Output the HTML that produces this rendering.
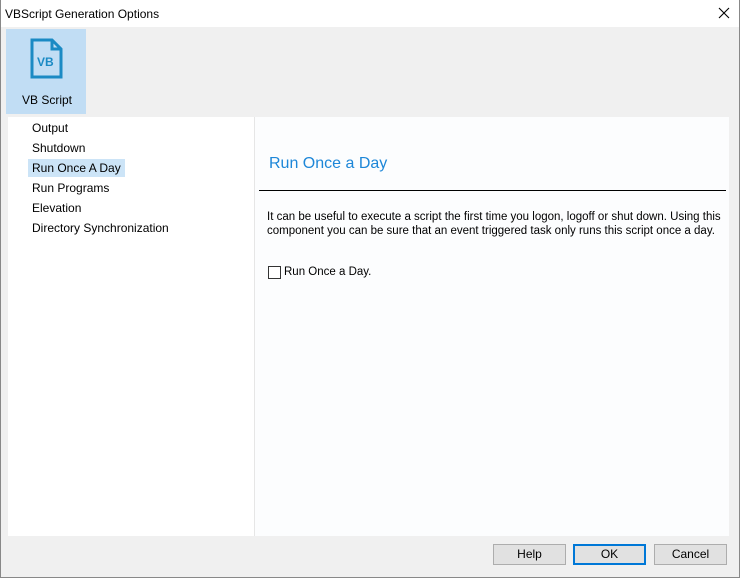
<!DOCTYPE html>
<html><head><meta charset="utf-8"><style>
*{margin:0;padding:0;box-sizing:border-box}
body{width:740px;height:578px;background:#fff;font-family:"Liberation Sans",sans-serif;font-size:12px;color:#000;position:relative;overflow:hidden}
.win{position:absolute;left:0;top:0;width:740px;height:578px;border:1px solid #888;border-top:none;background:#f0f0f0}
.title{position:absolute;left:0;top:0;width:738px;height:27px;background:#fff;font-size:12px}
.title span{position:absolute;left:4px;top:7px}
.x{position:absolute;left:716px;top:6px}
.tile{position:absolute;left:5px;top:29px;width:80px;height:85px;background:#c1ddf4}
.tile span{position:absolute;left:16px;top:64px}
.left{position:absolute;left:7px;top:117px;width:246px;height:419px;background:#fff}
.item{position:absolute;left:24px;height:18px;line-height:18px}
.sel{background:#cce4f7;padding:0 4px;left:20px}
.right{position:absolute;left:253px;top:117px;width:475px;height:419px;background:#fcfdfe;border-left:1px solid #e6e6e6}
h1{position:absolute;left:14px;top:38px;font-weight:normal;font-size:16px;color:#1e87d8}
.hr{position:absolute;left:4px;top:73px;width:467px;height:1px;background:#000}
.p{position:absolute;left:12px;top:93px;line-height:14px;font-size:11.5px}
.cb{position:absolute;left:13px;top:149px;width:13px;height:13px;border:1px solid #333;background:#fff}
.cbl{position:absolute;left:29px;top:149px;font-size:11.5px}
.btn{position:absolute;top:544px;width:73px;height:21px;background:#e1e1e1;border:1px solid #adadad;text-align:center;line-height:19px}
</style></head><body>
<div class="win">
<div class="title"><span>VBScript Generation Options</span>
<svg class="x" width="14" height="14" viewBox="0 0 14 14"><path d="M2 2L12 12M12 2L2 12" stroke="#000" stroke-width="1.1"/></svg></div>
<div class="tile">
<svg style="position:absolute;left:24px;top:9px" width="34" height="42" viewBox="0 0 34 42"><path d="M2 2H22L31 11V39H2Z M22 2V11H31" fill="none" stroke="#1b8ac4" stroke-width="3"/><text x="7" y="28" font-family="Liberation Sans" font-weight="bold" font-size="12" fill="#1b8ac4">VB</text></svg>
<span>VB Script</span></div>
<div class="left">
<div class="item" style="top:2px">Output</div>
<div class="item" style="top:22px">Shutdown</div>
<div class="item sel" style="top:42px">Run Once A Day</div>
<div class="item" style="top:62px">Run Programs</div>
<div class="item" style="top:82px">Elevation</div>
<div class="item" style="top:102px">Directory Synchronization</div>
</div>
<div class="right">
<h1>Run Once a Day</h1>
<div class="hr"></div>
<div class="p">It can be useful to execute a script the first time you logon, logoff or shut down. Using this<br>component you can be sure that an event triggered task only runs this script once a day.</div>
<div class="cb"></div><div class="cbl">Run Once a Day.</div>
</div>
<div class="btn" style="left:492px">Help</div>
<div class="btn" style="left:572px;border:2px solid #0078d7;line-height:17px">OK</div>
<div class="btn" style="left:653px">Cancel</div>
</div>
</body></html>
